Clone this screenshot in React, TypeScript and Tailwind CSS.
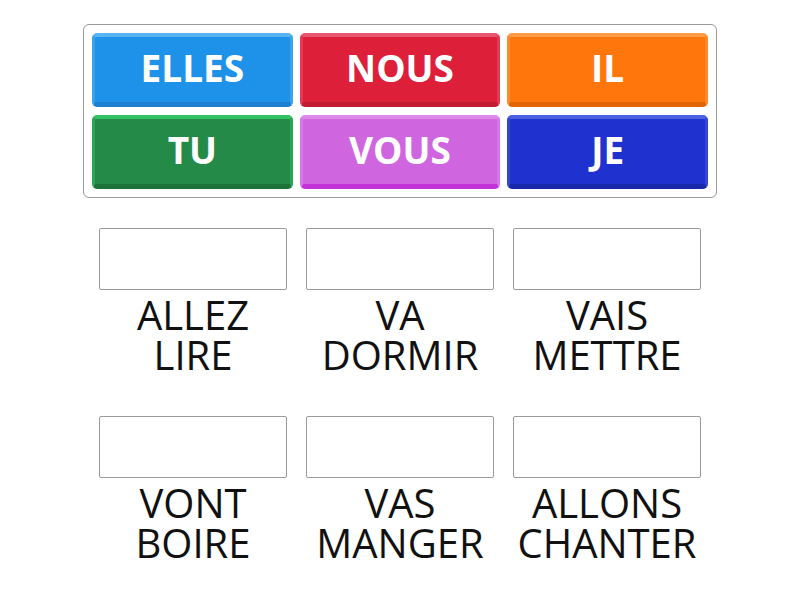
import React from 'react';

type Tile = { label: string; face: string; top: string; side: string; bottom: string };

const tiles: Tile[] = [
  { label: 'ELLES', face: 'bg-[#1e92e9]', top: 'border-t-[#58b4f2]', side: 'border-x-[#3ba2ee]', bottom: 'border-b-[#1b7fd2]' },
  { label: 'NOUS', face: 'bg-[#dd1f3a]', top: 'border-t-[#e85670]', side: 'border-x-[#e23a54]', bottom: 'border-b-[#c21a33]' },
  { label: 'IL', face: 'bg-[#ff760c]', top: 'border-t-[#ff9c45]', side: 'border-x-[#ff8a2a]', bottom: 'border-b-[#e06607]' },
  { label: 'TU', face: 'bg-[#238b47]', top: 'border-t-[#33c163]', side: 'border-x-[#2aa655]', bottom: 'border-b-[#1b733a]' },
  { label: 'VOUS', face: 'bg-[#cf66e0]', top: 'border-t-[#dd88eb]', side: 'border-x-[#d676e6]', bottom: 'border-b-[#c331d8]' },
  { label: 'JE', face: 'bg-[#1f32d0]', top: 'border-t-[#4d5fe2]', side: 'border-x-[#3345d8]', bottom: 'border-b-[#1928a8]' },
];

const targets = [
  ['ALLEZ', 'LIRE'],
  ['VA', 'DORMIR'],
  ['VAIS', 'METTRE'],
  ['VONT', 'BOIRE'],
  ['VAS', 'MANGER'],
  ['ALLONS', 'CHANTER'],
];

function TileButton({ tile }: { tile: Tile }) {
  return (
    <div
      className={`h-[74px] rounded-[5px] border-t-[4px] border-x-[3px] border-b-[5px] ${tile.face} ${tile.top} ${tile.side} ${tile.bottom} flex items-center justify-center pb-[5px]`}
    >
      <span className="text-white text-[37px] font-bold leading-none">{tile.label}</span>
    </div>
  );
}

export default function App() {
  return (
    <div className="w-[800px] h-[600px] bg-white font-['Open_Sans',sans-serif] overflow-hidden">
      <div className="w-[634px] mx-auto mt-[24px] border border-[#9a9a9a] rounded-[6px] p-[8px] grid grid-cols-3 gap-x-[7px] gap-y-[8px]">
        {tiles.map((t) => (
          <TileButton key={t.label} tile={t} />
        ))}
      </div>

      <div className="w-[602px] mx-auto mt-[30px] grid grid-cols-3 gap-x-[19px] gap-y-[41px]">
        {targets.map(([a, b]) => (
          <div key={a + b} className="flex flex-col items-center">
            <div className="w-[188px] h-[62px] border border-[#9a9a9a] rounded-[2px] bg-white" />
            <div className="mt-[5px] text-center text-[40px] leading-[40px] text-[#111] whitespace-nowrap">
              {a}
              <br />
              {b}
            </div>
          </div>
        ))}
      </div>
    </div>
  );
}
